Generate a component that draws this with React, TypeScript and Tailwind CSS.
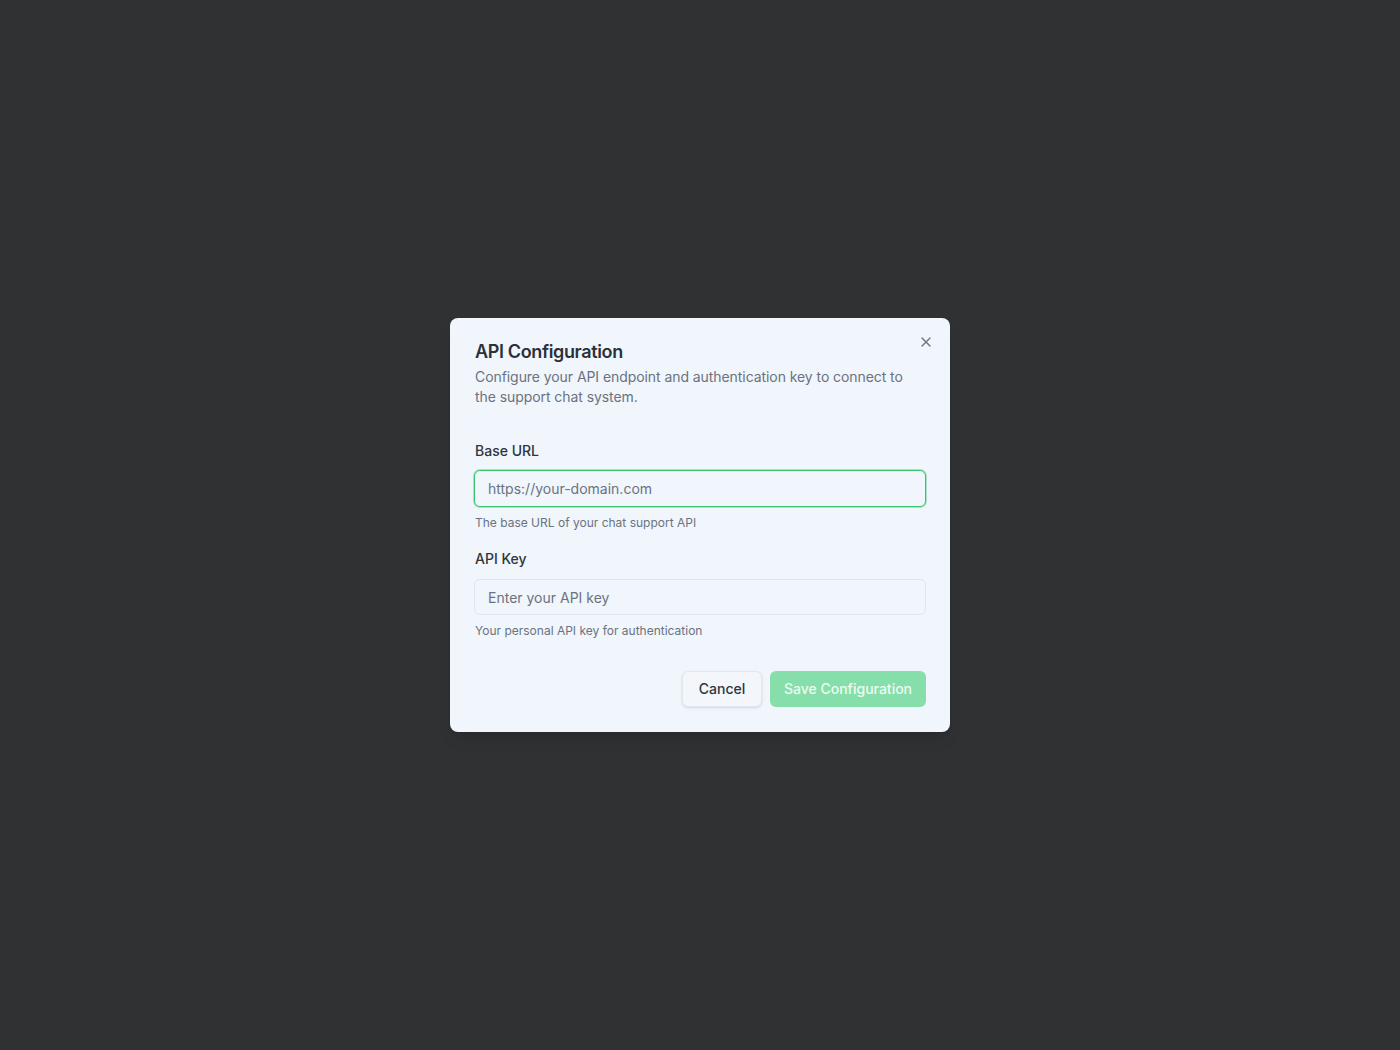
import { X } from "lucide-react"

export default function App() {
  return (
    <main
      className="flex min-h-screen w-full items-center justify-center bg-[#2f3133]"
      style={{ fontFamily: "Inter, 'Noto Sans', sans-serif" }}
    >
      <div className="relative w-[500px] rounded-lg bg-[#f0f6fc] px-6 pb-[25px] pt-[25px] shadow-lg">
        <button className="absolute right-4 top-4 text-[#4b5563] opacity-80">
          <X className="h-4 w-4" strokeWidth={2} />
        </button>

        <div className="flex flex-col gap-1.5 pl-px">
          <h2 className="text-lg font-semibold leading-[18px] tracking-[-0.02em] text-[#2b3138]">
            API Configuration
          </h2>
          <p className="max-w-[440px] text-sm leading-5 tracking-[-0.005em] text-[#6b7280]">
            Configure your API endpoint and authentication key to connect to the support chat system.
          </p>
        </div>

        <form className="mt-[34px]">
          <label htmlFor="base-url" className="block pl-px text-sm font-medium leading-5 text-[#2f353c]">
            Base URL
          </label>
          <input
            id="base-url"
            placeholder="https://your-domain.com"
            className="mt-[9px] h-[37px] w-full rounded-md border border-[#3cc46e] bg-[#f0f6fc] px-[13px] text-sm text-[#2f353c] outline-none ring-1 ring-[#3cc46e]/40 placeholder:text-[#6b7280]"
          />
          <p className="mt-2 pl-px text-xs leading-4 text-[#6b7280]">The base URL of your chat support API</p>

          <label htmlFor="api-key" className="mt-[18px] block pl-px text-sm font-medium leading-5 text-[#2f353c]">
            API Key
          </label>
          <input
            id="api-key"
            placeholder="Enter your API key"
            className="mt-[10px] h-9 w-full rounded-md border border-[#dfe5ec] bg-[#f0f6fc] px-[13px] text-sm text-[#2f353c] outline-none placeholder:text-[#6b7280]"
          />
          <p className="mt-2 pl-px text-xs leading-4 text-[#6b7280]">Your personal API key for authentication</p>

          <div className="mt-8 flex justify-end gap-2">
            <button
              type="button"
              className="h-9 w-20 rounded-md border border-[#e1e7ee] bg-[#f3f7fb] text-sm font-medium text-[#2f353c] shadow-sm"
            >
              Cancel
            </button>
            <button
              type="button"
              className="h-9 w-[156px] rounded-md bg-[#86dfab] text-sm font-medium text-[#eefaf2]"
            >
              Save Configuration
            </button>
          </div>
        </form>
      </div>
    </main>
  )
}
